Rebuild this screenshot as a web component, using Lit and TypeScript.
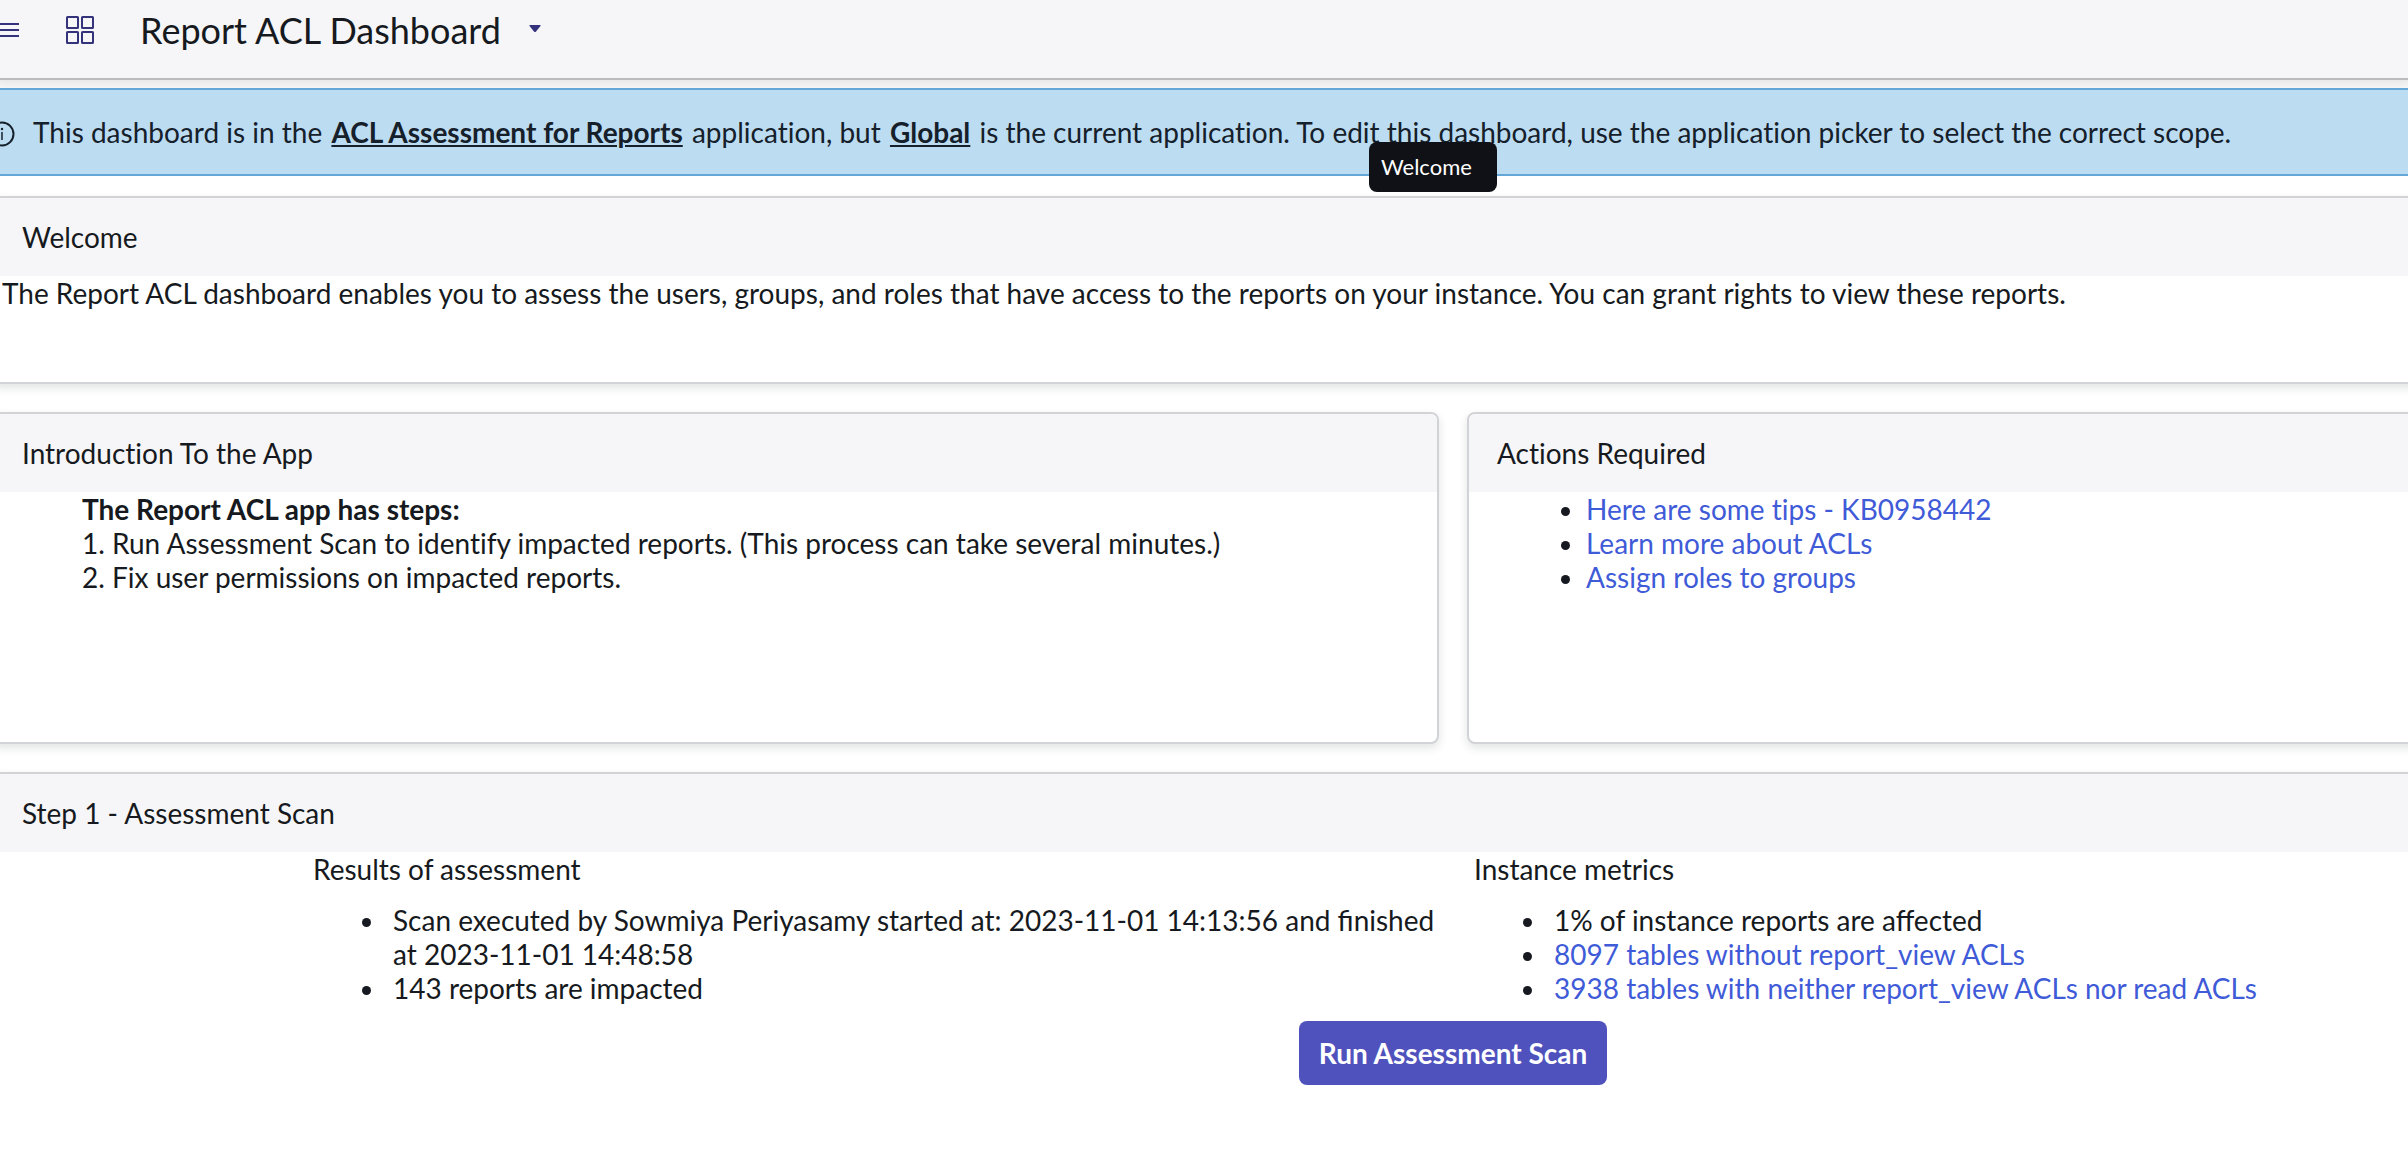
import { LitElement, html, css } from "lit";
import { customElement, property } from "lit/decorators.js";

@customElement("dashboard-card")
class DashboardCard extends LitElement {
  @property() heading = "";

  static styles = css`
    :host {
      display: block;
      box-sizing: border-box;
      background: #fff;
      border: 2px solid #d2d3d7;
      border-radius: 8px;
      box-shadow: 0 4px 10px rgba(20, 22, 30, 0.12);
    }
    .heading {
      margin: 0;
      padding: 22px 28px;
      background: #f6f6f8;
      border-radius: 6px 6px 0 0;
      font-size: 28px;
      font-weight: 400;
      line-height: 34px;
    }
  `;

  render() {
    return html`
      <h2 class="heading">${this.heading}</h2>
      <slot></slot>
    `;
  }
}

@customElement("app-root")
class AppRoot extends LitElement {
  static styles = css`
    :host {
      display: block;
      height: 100vh;
      overflow: hidden;
      background: #fff;
      color: #161a20;
      font-family: Lato, "Liberation Sans", sans-serif;
      font-size: 28px;
      line-height: 34px;
      font-variant-ligatures: none;
    }
    * {
      box-sizing: border-box;
    }
    a {
      color: #3f5bd8;
      text-decoration: none;
    }
    p,
    ul,
    h1,
    h3 {
      margin: 0;
      padding: 0;
      font-weight: 400;
      font-size: inherit;
    }
    .topbar {
      display: flex;
      align-items: flex-start;
      height: 80px;
      background: #f6f6f8;
      border-bottom: 2px solid #bbbbbe;
      box-shadow: 0 0 10px 6px rgba(20, 22, 30, 0.1);
    }
    .icon-button {
      display: flex;
      padding: 0;
      border: 0;
      background: none;
      color: #35327c;
    }
    .icon-button svg {
      display: block;
    }
    .menu {
      padding-top: 14px;
      margin-right: 44px;
    }
    .apps {
      padding-top: 14px;
      margin-right: 43px;
    }
    .topbar .title {
      padding-top: 9px;
      font-size: 36px;
      line-height: 42px;
    }
    .caret {
      padding: 24px 0 0 26px;
    }
    .banner {
      position: relative;
      display: flex;
      align-items: center;
      gap: 18px;
      height: 88px;
      margin-top: 8px;
      background: #bcdcf2;
      border-top: 2px solid #63a6d8;
      border-bottom: 2px solid #63a6d8;
      color: #15202b;
    }
    .banner a {
      margin: 0 2px;
      color: inherit;
      font-weight: 700;
      text-decoration: underline;
      text-decoration-thickness: 2px;
      text-underline-offset: 2px;
    }
    .tooltip {
      position: absolute;
      left: 1369px;
      top: 52px;
      width: 128px;
      padding: 11px 12px;
      border-radius: 8px;
      background: #101116;
      color: #fff;
      font-size: 22px;
      line-height: 28px;
    }
    .board {
      display: grid;
      grid-template-columns: 1fr 1fr;
      gap: 28px;
      margin: 20px -506px 0 -8px;
    }
    .wide {
      grid-column: 1 / -1;
    }
    .board .welcome {
      padding: 0 8px 72px;
    }
    .intro {
      padding: 0 88px 148px;
    }
    .board .links {
      padding: 0 0 148px 117px;
    }
    .scan {
      display: grid;
      grid-template-columns: 1fr 1fr;
      gap: 16px 42px;
      padding: 0 319px 80px;
      font-variant-ligatures: normal;
    }
    .scan ul {
      margin: 17px -16px 0 0;
      padding-left: 74px;
    }
    .scan li {
      padding-left: 6px;
    }
    .run {
      grid-column: 1 / -1;
      justify-self: center;
      padding: 15px 20px;
      border: 0;
      border-radius: 8px;
      background: #4f52bd;
      color: #fff;
      font: inherit;
      font-weight: 700;
    }
  `;

  render() {
    return html`
      <header class="topbar">
        <button class="icon-button menu" aria-label="Menu">
          <svg width="21" height="32" viewBox="0 0 21 32" fill="none" stroke="currentColor" stroke-width="2">
            <path d="M0 10H19M0 16H19M0 22H19" />
          </svg>
        </button>
        <button class="icon-button apps" aria-label="Dashboards">
          <svg width="32" height="32" viewBox="0 0 32 32" fill="none" stroke="currentColor" stroke-width="2">
            <rect x="2" y="3" width="11" height="11" rx="0.5" />
            <rect x="17" y="3" width="11" height="11" rx="0.5" />
            <rect x="2" y="18" width="11" height="11" rx="0.5" />
            <rect x="17" y="18" width="11" height="11" rx="0.5" />
          </svg>
        </button>
        <h1 class="title">Report ACL Dashboard</h1>
        <button class="icon-button caret" aria-label="Choose dashboard">
          <svg width="16" height="10" viewBox="0 0 16 10" fill="currentColor">
            <path d="M3 1H13Q14 1 13.500 2L9 7.500Q8 8.500 7 7.500L2.500 2Q2 1 3 1Z" />
          </svg>
        </button>
      </header>

      <div class="banner" role="status">
        <svg width="15" height="32" viewBox="0 0 15 32" fill="none" stroke="currentColor" stroke-width="2">
          <circle cx="2" cy="18" r="11.500" />
          <path d="M2 16V24" stroke-width="1.500" />
          <circle cx="2" cy="13" r="1.200" fill="currentColor" stroke="none" />
        </svg>
        <p>
          This dashboard is in the <a href="#app">ACL Assessment for Reports</a> application, but
          <a href="#global">Global</a> is the current application. To edit this dashboard, use the application picker
          to select the correct scope.
        </p>
        <div class="tooltip" role="tooltip">Welcome</div>
      </div>

      <main class="board">
        <dashboard-card class="wide" heading="Welcome">
          <p class="welcome">
            The Report ACL dashboard enables you to assess the users, groups, and roles that have access to the reports
            on your instance. You can grant rights to view these reports.
          </p>
        </dashboard-card>

        <dashboard-card heading="Introduction To the App">
          <div class="intro">
            <p><strong>The Report ACL app has steps:</strong></p>
            <p>1. Run Assessment Scan to identify impacted reports. (This process can take several minutes.)</p>
            <p>2. Fix user permissions on impacted reports.</p>
          </div>
        </dashboard-card>

        <dashboard-card heading="Actions Required">
          <ul class="links">
            <li><a href="#tips">Here are some tips - KB0958442</a></li>
            <li><a href="#acls">Learn more about ACLs</a></li>
            <li><a href="#roles">Assign roles to groups</a></li>
          </ul>
        </dashboard-card>

        <dashboard-card class="wide" heading="Step 1 - Assessment Scan">
          <div class="scan">
            <section>
              <h3>Results of assessment</h3>
              <ul>
                <li>
                  Scan executed by Sowmiya Periyasamy started at: 2023-11-01 14:13:56 and finished at 2023-11-01
                  14:48:58
                </li>
                <li>143 reports are impacted</li>
              </ul>
            </section>
            <section>
              <h3>Instance metrics</h3>
              <ul>
                <li>1% of instance reports are affected</li>
                <li><a href="#no-view">8097 tables without report_view ACLs</a></li>
                <li><a href="#neither">3938 tables with neither report_view ACLs nor read ACLs</a></li>
              </ul>
            </section>
            <button class="run">Run Assessment Scan</button>
          </div>
        </dashboard-card>
      </main>
    `;
  }
}
